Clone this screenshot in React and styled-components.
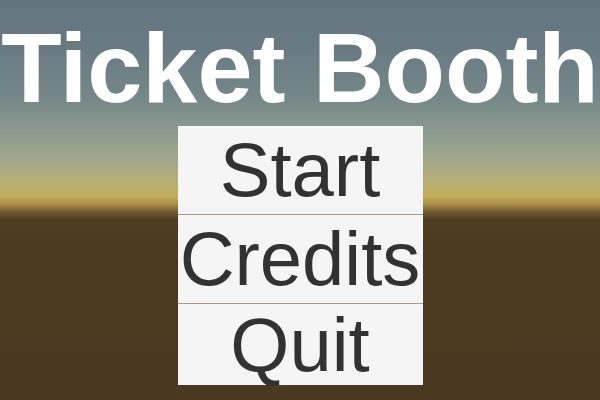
import React from 'react';
import styled, { createGlobalStyle } from 'styled-components';

const GlobalStyle = createGlobalStyle`
  html, body {
    margin: 0;
    padding: 0;
  }
  body {
    font-family: "Liberation Sans", Arial, sans-serif;
  }
`;

const MENU_ITEMS = [
  { label: 'Start', height: 88 },
  { label: 'Credits', height: 88 },
  { label: 'Quit', height: 81 },
];

const App = () => {
  return (
    <>
      <GlobalStyle />
      <Scene>
        <Title>Ticket Booth</Title>
        <Menu>
          {MENU_ITEMS.map((item) => (
            <MenuButton key={item.label} $height={item.height}>
              {item.label}
            </MenuButton>
          ))}
        </Menu>
      </Scene>
    </>
  );
};

// sky fading into the horizon glow and the brown ground plane
const Scene = styled.div`
  width: 600px;
  height: 400px;
  overflow: hidden;
  display: flex;
  flex-direction: column;
  align-items: center;
  background: linear-gradient(
    to bottom,
    #637480 0%,
    #697a83 12%,
    #778889 25%,
    #8c9a8f 33%,
    #a2a88a 40%,
    #b4ae76 45%,
    #c3ad5c 49%,
    #a98f48 51%,
    #6e5731 53%,
    #4f3c21 55%,
    #4b3920 70%,
    #4a3820 100%
  );
`;

const Title = styled.h1`
  margin: 18px 0 0;
  font-family: "Liberation Sans", Arial, sans-serif;
  font-weight: 700;
  font-size: 99px;
  line-height: 99px;
  color: #ffffff;
  white-space: nowrap;
  text-align: center;
`;

const Menu = styled.div`
  margin-top: 9px;
  width: 245px;
  display: flex;
  flex-direction: column;
  gap: 1px;
  background: #a89c88;
`;

const MenuButton = styled.button`
  height: ${(p) => p.$height}px;
  display: flex;
  align-items: center;
  justify-content: center;
  padding: 0;
  border: none;
  background: #f5f5f5;
  color: #323232;
  font-family: "Liberation Sans", Arial, sans-serif;
  font-size: 76px;
  line-height: 1;
  cursor: pointer;
`;

export default App;
